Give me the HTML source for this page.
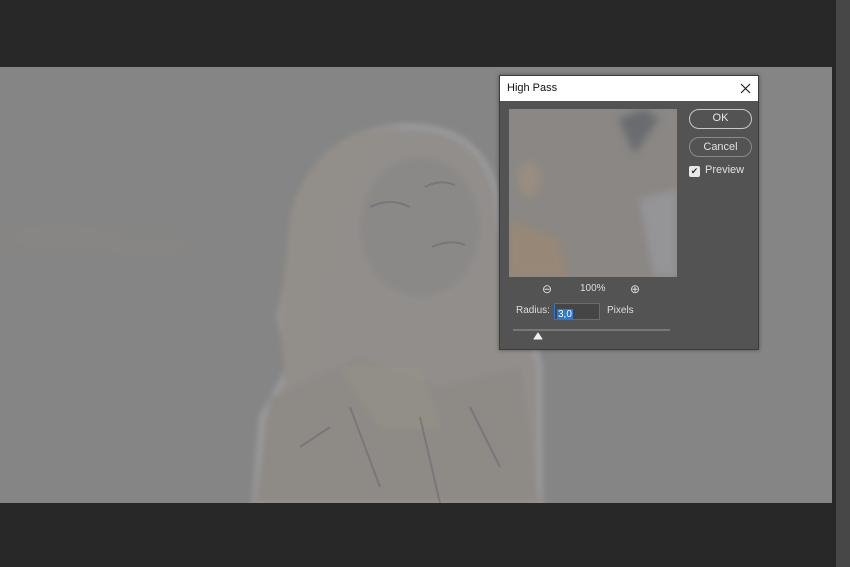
<!DOCTYPE html>
<html><head><style>
*{margin:0;padding:0;box-sizing:border-box}
body{width:850px;height:567px;background:#282828;position:relative;overflow:hidden;font-family:"Liberation Sans",sans-serif}
.abs{position:absolute}
</style></head><body>
<div class="abs" style="left:836px;top:0;width:14px;height:567px;background:#474747"></div>
<div class="abs" style="left:0;top:67px;width:832px;height:436px;background:#858585;overflow:hidden">
<svg width="832" height="436" style="position:absolute;left:0;top:0">
<defs><filter id="b" x="-20%" y="-20%" width="140%" height="140%"><feGaussianBlur stdDeviation="3"/></filter>
<filter id="b2"><feGaussianBlur stdDeviation="10"/></filter></defs>
<g filter="url(#b2)" opacity="0.4"><ellipse cx="60" cy="170" rx="60" ry="12" fill="#928880"/><ellipse cx="150" cy="180" rx="50" ry="10" fill="#8e8883"/></g>
<g filter="url(#b)" opacity="0.6">
<path d="M300 150 C300 90 360 55 420 60 C480 65 500 110 500 160 L520 230 L540 300 L540 436 L255 436 L262 350 L290 300 L280 250 Z" fill="#9a9490" stroke="#a8a8ac" stroke-width="6"/>
<path d="M290 150 C300 100 340 60 400 60 C360 90 330 150 330 230 L320 300 L285 320 L280 250 Z" fill="#9c948c"/>
<ellipse cx="420" cy="160" rx="60" ry="70" fill="#908c8a"/>
<path d="M270 330 L360 290 L440 320 L520 300 L540 436 L255 436 Z" fill="#958e88"/>
<path d="M340 300 L420 300 L440 360 L380 360 Z" fill="#a09c88" opacity="0.7"/>
</g>
<g opacity="0.5" stroke="#6a6070" stroke-width="2" fill="none">
<path d="M370 140 Q390 130 410 140"/><path d="M425 120 Q440 112 455 118"/><path d="M432 180 Q450 172 465 178"/>
<path d="M300 380 L330 360 M350 340 L380 420 M420 350 L440 436 M470 340 L500 400"/>
</g>
</svg>
</div>
<div class="abs" style="left:499px;top:75px;width:260px;height:275px;background:#535353;border:1px solid #3c3c3c;box-shadow:0 0 4px rgba(0,0,0,.4)">
 <div class="abs" style="left:0;top:0;width:258px;height:25px;background:#fff;color:#111;font-size:11px;line-height:25px;padding-left:7px">High Pass
  <svg class="abs" style="right:7px;top:7px" width="11" height="11"><path d="M1 1 L10 10 M10 1 L1 10" stroke="#222" stroke-width="1.2"/></svg></div>
 <div class="abs" style="left:9px;top:33px;width:168px;height:168px;background:#8a8784;overflow:hidden">
  <svg width="168" height="168"><defs><filter id="c"><feGaussianBlur stdDeviation="4"/></filter></defs>
  <g filter="url(#c)" opacity="0.7"><path d="M110 10 L135 0 L150 10 L125 45 Z" fill="#5c6068"/><path d="M0 110 L50 130 L60 168 L0 168 Z" fill="#9d8872"/><path d="M130 90 L168 80 L168 168 L145 168 Z" fill="#9a9aa0"/><ellipse cx="20" cy="70" rx="12" ry="18" fill="#a09080"/></g></svg>
 </div>
 <div class="abs" style="left:189px;top:33px;width:63px;height:20px;border:1.5px solid #c8c8c8;border-radius:10px;color:#e8e8e8;font-size:11px;text-align:center;line-height:17px">OK</div>
 <div class="abs" style="left:189px;top:61px;width:63px;height:20px;border:1px solid #8a8a8a;border-radius:10px;color:#e0e0e0;font-size:11px;text-align:center;line-height:18px">Cancel</div>
 <div class="abs" style="left:189px;top:90px;width:11px;height:11px;background:#e8e8e8;border-radius:2px;color:#333;font-size:9px;line-height:11px;text-align:center">✔</div>
 <div class="abs" style="left:205px;top:88px;color:#e0e0e0;font-size:11px">Preview</div>
 <div class="abs" style="left:42px;top:206px;color:#ddd;font-size:12px">⊖</div>
 <div class="abs" style="left:80px;top:207px;color:#ddd;font-size:10px">100%</div>
 <div class="abs" style="left:130px;top:206px;color:#ddd;font-size:12px">⊕</div>
 <div class="abs" style="left:16px;top:229px;color:#ddd;font-size:10px">Radius:</div>
 <div class="abs" style="left:54px;top:227px;width:46px;height:17px;background:#454545;border:1px solid #2a78d0"><span style="background:#2a78d0;color:#fff;font-size:10px;line-height:15px;padding:0 1px;margin-left:2px">3,0</span></div>
 <div class="abs" style="left:107px;top:229px;color:#ddd;font-size:10px">Pixels</div>
 <div class="abs" style="left:13px;top:253px;width:157px;height:2px;background:#777"></div>
 <svg class="abs" style="left:33px;top:256px" width="10" height="9"><path d="M5 1 L9 7 L1 7 Z" fill="#f0f0f0" stroke="#f0f0f0" stroke-linejoin="round"/></svg>
</div>
</body></html>
